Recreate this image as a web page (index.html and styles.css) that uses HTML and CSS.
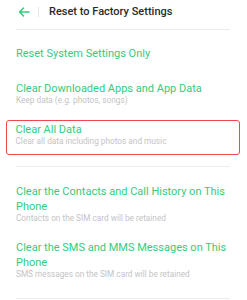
FILE: index.html
```html
<!DOCTYPE html>
<html lang="en">
<head>
  <meta charset="UTF-8">
  <meta name="viewport" content="width=device-width, initial-scale=1.0">
  <title>Reset to Factory Settings</title>
  <link rel="stylesheet" href="styles.css">
</head>
<body>
  <div class="header">
    <span class="back-btn">
      <svg width="12" height="10" viewBox="0 0 12 10">
        <path d="M11 5H1.5M5.5 1L1.5 5l4 4" fill="none" stroke="#36ca7d" stroke-width="1.6" stroke-linecap="round" stroke-linejoin="round"/>
      </svg>
    </span>
    <span class="header-divider"></span>
    <h1>Reset to Factory Settings</h1>
  </div>

  <div class="list">
    <div class="item single">
      <div class="item-title">Reset System Settings Only</div>
    </div>
    <div class="item">
      <div class="item-title">Clear Downloaded Apps and App Data</div>
      <div class="item-sub">Keep data (e.g. photos, songs)</div>
    </div>
    <div class="item highlighted">
      <div class="item-title">Clear All Data</div>
      <div class="item-sub">Clear all data including photos and music</div>
    </div>
  </div>

  <div class="list bordered">
    <div class="item">
      <div class="item-title">Clear the Contacts and Call History on This Phone</div>
      <div class="item-sub">Contacts on the SIM card will be retained</div>
    </div>
    <div class="item">
      <div class="item-title">Clear the SMS and MMS Messages on This Phone</div>
      <div class="item-sub">SMS messages on the SIM card will be retained</div>
    </div>
  </div>
</body>
</html>
```

FILE: styles.css
```css
* {
  margin: 0;
  padding: 0;
  box-sizing: border-box;
}

body {
  width: 247px;
  height: 300px;
  overflow: hidden;
  background: white;
  font-family: Roboto, 'Noto Sans', sans-serif;
  color: #333;
}

.header {
  display: flex;
  align-items: center;
  height: 30px;
  margin: 0 17px 0 16px;
  padding-bottom: 6px;
  border-bottom: 1px solid #ececec;
}

.back-btn {
  display: flex;
  width: 22px;
  padding-left: 2px;
}

.header-divider {
  width: 1px;
  height: 10px;
  background: #e6e6e6;
  margin-right: 10px;
}

.header h1 {
  font-size: 11px;
  font-weight: 500;
  color: #2b2b2b;
}

.list {
  margin: 0 17px 0 16px;
  padding: 8px 0 11px;
}

.list.bordered {
  border-top: 1px solid #eeeeee;
  border-bottom: 1px solid #eeeeee;
  padding: 9px 0 10px;
}

.item {
  padding: 8px 0;
}

.item.single {
  padding-bottom: 12px;
}

.item-title {
  font-size: 11px;
  line-height: 15px;
  color: #36ca7d;
}

.item-sub {
  font-size: 8.25px;
  line-height: 11px;
  color: #c4c4c4;
  margin-top: -1px;
}

.item.highlighted {
  margin: 6px -10px 0;
  padding: 0.5px 8.5px 7.5px;
  border: 1.5px solid #f2474d;
  border-radius: 3px;
}
```
